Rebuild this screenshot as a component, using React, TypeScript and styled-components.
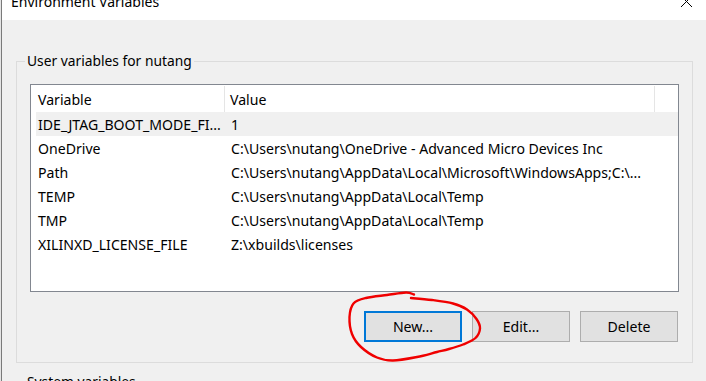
import React from "react";
import styled, { createGlobalStyle } from "styled-components";

const Global = createGlobalStyle`
  html, body { margin: 0; padding: 0; background: #e4e4e4; overflow: hidden; }
  body { font-family: "Noto Sans", "Open Sans", sans-serif; color: #000; }
  * { box-sizing: border-box; }
`;

const Window = styled.div`
  position: relative;
  width: 705px;
  height: 381px;
  margin-left: 1px;
  border-left: 1px solid #7a7a7a;
  background: #f0f0f0;
  overflow: hidden;
  display: flex;
  flex-direction: column;
`;

const TitleBar = styled.div`
  height: 20px;
  flex: none;
  background: #ffffff;
  display: flex;
  justify-content: space-between;
  align-items: flex-start;
  padding: 0 13px 0 9px;
  overflow: hidden;
`;

const Title = styled.div`
  font-size: 14px;
  line-height: 14px;
  margin-top: -5px;
  white-space: nowrap;
`;

const CloseIcon = styled.svg`
  width: 13px;
  height: 13px;
  margin-top: -5px;
`;

const Body = styled.div`
  flex: 1;
  display: flex;
  flex-direction: column;
  padding: 41px 13px 0 14px;
`;

const Group = styled.div<{ $height?: number }>`
  flex: none;
  height: ${(p) => (p.$height ? `${p.$height}px` : "auto")};
  border: 1px solid #dcdcdc;
  display: flex;
  flex-direction: column;
  padding: 0 13px;
  & + & {
    margin-top: 19px;
  }
`;

const GroupLabel = styled.div`
  align-self: flex-start;
  margin: -9px 0 0 -5px;
  padding: 0 2px;
  height: 16px;
  line-height: 16px;
  font-size: 13.8px;
  background: #f0f0f0;
  white-space: nowrap;
`;

const ListBox = styled.div`
  margin-top: 15px;
  height: 208px;
  border: 1px solid #828790;
  background: #ffffff;
  padding-left: 5px;
  display: flex;
  flex-direction: column;
`;

const Grid = styled.div`
  display: grid;
  grid-template-columns: 189px 430px;
  font-size: 14.1px;
  white-space: nowrap;
`;

const HeaderRow = styled(Grid)`
  height: 27px;
  padding-top: 1px;
`;

const HeaderCell = styled.div<{ $first?: boolean }>`
  display: flex;
  align-items: center;
  padding: 1px 0 0 ${(p) => (p.$first ? 2 : 5)}px;
  border-right: 1px solid #e5e5e5;
  border-left: ${(p) => (p.$first ? "none" : "1px solid transparent")};
  margin-left: ${(p) => (p.$first ? 0 : -1)}px;
`;

const Row = styled(Grid)<{ $selected?: boolean }>`
  height: 24px;
  align-items: center;
  background: ${(p) => (p.$selected ? "#f0f0f0" : "transparent")};
`;

const Cell = styled.div<{ $first?: boolean }>`
  padding-left: ${(p) => (p.$first ? 2 : 6)}px;
  overflow: hidden;
`;

const ButtonRow = styled.div`
  margin-top: 19px;
  display: flex;
  justify-content: flex-end;
  gap: 10px;
  padding-right: 1px;
`;

const Button = styled.button<{ $focused?: boolean }>`
  width: 98px;
  height: 31px;
  background: #e1e1e1;
  border: ${(p) => (p.$focused ? "2px solid #0078d7" : "1px solid #adadad")};
  font-family: inherit;
  font-size: 14.1px;
  color: #000;
  padding: 0;
  display: flex;
  align-items: center;
  justify-content: center;
`;

const Annotation = styled.svg`
  position: absolute;
  left: -2px;
  top: 0;
  width: 706px;
  height: 381px;
  pointer-events: none;
`;

const rows: [string, string][] = [
  ["IDE_JTAG_BOOT_MODE_FI...", "1"],
  ["OneDrive", "C:\\Users\\nutang\\OneDrive - Advanced Micro Devices Inc"],
  ["Path", "C:\\Users\\nutang\\AppData\\Local\\Microsoft\\WindowsApps;C:\\..."],
  ["TEMP", "C:\\Users\\nutang\\AppData\\Local\\Temp"],
  ["TMP", "C:\\Users\\nutang\\AppData\\Local\\Temp"],
  ["XILINXD_LICENSE_FILE", "Z:\\xbuilds\\licenses"],
];

const pts: [number, number][] = [
  [411, 298], [432, 300], [453, 303.5], [467, 309.5], [476.5, 319], [480, 328.5],
  [475.5, 338], [463, 344.5], [449, 349], [437, 352], [417, 357], [393, 360.5],
  [377, 357.5], [361, 347], [352, 334], [349.5, 317], [353.5, 303.5], [366, 298],
  [387, 295], [406, 292.5], [414, 294.5],
];

function smoothPath(p: [number, number][]): string {
  let d = `M${p[0][0]},${p[0][1]}`;
  for (let i = 0; i < p.length - 1; i++) {
    const p0 = p[i - 1] || p[i];
    const p1 = p[i];
    const p2 = p[i + 1];
    const p3 = p[i + 2] || p2;
    const c1x = p1[0] + (p2[0] - p0[0]) / 6;
    const c1y = p1[1] + (p2[1] - p0[1]) / 6;
    const c2x = p2[0] - (p3[0] - p1[0]) / 6;
    const c2y = p2[1] - (p3[1] - p1[1]) / 6;
    d += ` C${c1x.toFixed(1)},${c1y.toFixed(1)} ${c2x.toFixed(1)},${c2y.toFixed(1)} ${p2[0]},${p2[1]}`;
  }
  return d;
}

export default function App() {
  return (
    <>
      <Global />
      <Window>
        <TitleBar>
          <Title>Environment Variables</Title>
          <CloseIcon viewBox="0 0 13 13">
            <path d="M1 1 L12 12 M12 1 L1 12" stroke="#000" strokeWidth="1" fill="none" />
          </CloseIcon>
        </TitleBar>
        <Body>
          <Group $height={302}>
            <GroupLabel>User variables for nutang</GroupLabel>
            <ListBox>
              <HeaderRow>
                <HeaderCell $first>Variable</HeaderCell>
                <HeaderCell>Value</HeaderCell>
              </HeaderRow>
              {rows.map(([k, v], i) => (
                <Row key={k} $selected={i === 0}>
                  <Cell $first>{k}</Cell>
                  <Cell>{v}</Cell>
                </Row>
              ))}
            </ListBox>
            <ButtonRow>
              <Button $focused>New...</Button>
              <Button>Edit...</Button>
              <Button>Delete</Button>
            </ButtonRow>
          </Group>
          <Group $height={120}>
            <GroupLabel>System variables</GroupLabel>
          </Group>
        </Body>
        <Annotation viewBox="0 0 706 381">
          <path d={smoothPath(pts)} stroke="#f00000" strokeWidth="2.4" fill="none" strokeLinecap="round" strokeLinejoin="round" />
        </Annotation>
      </Window>
    </>
  );
}
